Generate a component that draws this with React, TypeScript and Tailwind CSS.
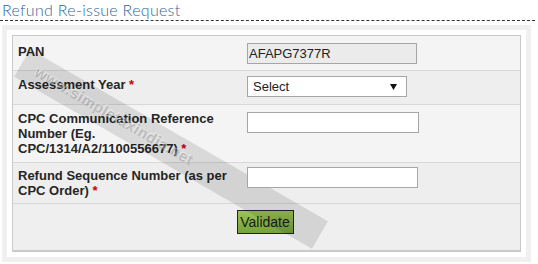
import React from "react";

const Star = () => <span className="text-[#cc0000]"> *</span>;

export default function App() {
  return (
    <div className="relative w-[538px] h-[264px] overflow-hidden bg-white font-['Liberation_Sans',Arial,sans-serif]">
      <div className="h-[21px] border-b border-dashed border-[#333] mr-[3px]">
        <div className="pl-[2px] text-[16px] leading-[19px] text-[#2f679b] font-['Lato',sans-serif] font-light tracking-[0.3px]">
          Refund Re-issue Request
        </div>
      </div>
      <div className="mt-[4px] ml-[2px] w-[529px] p-[5px] bg-[#f0f0f0]">
        <div className="bg-white p-[5px]">
          <div className="border border-b-2 border-[#c9c9c9] text-[13px] leading-[15px] text-[#262626]">
            {/* PAN */}
            <div className="flex h-[34px] bg-[#f4f4f4]">
              <div className="w-[228px] pl-[5px] pr-[5px] pt-[8px] font-bold">PAN</div>
              <div className="pl-[6px] pt-[7px]">
                <div className="relative z-10 w-[170px] h-[21px] border border-[#a6a6a6] bg-[#ebebeb] pl-[1px] leading-[19px] text-[#222]">
                  AFAPG7377R
                </div>
              </div>
            </div>
            {/* Assessment Year */}
            <div className="flex h-[34px] bg-[#eeeeee] border-t border-[#d8d8d8]">
              <div className="w-[228px] pl-[5px] pr-[5px] pt-[6px] font-bold">
                Assessment Year<Star />
              </div>
              <div className="pl-[6px] pt-[5px]">
                <div className="relative z-10 flex items-center justify-between w-[160px] h-[21px] border border-[#a6a6a6] bg-white pl-[5px] pr-[9px] leading-[19px] text-[#222]">
                  <span>Select</span>
                  <svg width="7" height="6" viewBox="0 0 7 6">
                    <polygon points="0,0 7,0 3.5,6" fill="#111" />
                  </svg>
                </div>
              </div>
            </div>
            {/* CPC */}
            <div className="flex h-[58px] bg-[#f4f4f4] border-t border-[#d8d8d8]">
              <div className="w-[228px] pl-[5px] pr-[5px] pt-[6px] font-bold">
                CPC Communication Reference Number (Eg. CPC/1314/A2/1100556677)<Star />
              </div>
              <div className="pl-[6px] pt-[7px]">
                <div className="relative z-10 w-[172px] h-[21px] border border-[#a6a6a6] bg-white" />
              </div>
            </div>
            {/* Refund Seq */}
            <div className="flex h-[41px] bg-[#eeeeee] border-t border-[#d8d8d8]">
              <div className="w-[228px] pl-[5px] pr-[5px] pt-[5px] font-bold">
                Refund Sequence Number (as per CPC Order)<Star />
              </div>
              <div className="pl-[6px] pt-[4px]">
                <div className="relative z-10 w-[171px] h-[21px] border border-[#a6a6a6] bg-white" />
              </div>
            </div>
            {/* Button */}
            <div className="flex justify-center h-[47px] bg-[#efefef] border-t border-[#d8d8d8] pt-[6px]">
              <div className="ml-[-3px] h-[24px] w-[57px] border border-[#222] bg-gradient-to-b from-[#9cc456] to-[#75a23a] flex items-center justify-center text-[14px] text-[#1a1a1a]">
                Validate
              </div>
            </div>
          </div>
        </div>
      </div>
      {/* watermark */}
      <div className="absolute left-[-1px] top-[133px] w-[344px] h-[32px] rotate-[30deg] bg-black/[0.11] flex items-center pl-[16px] pointer-events-none z-[5]">
        <span className="text-[15px] font-bold text-black/[0.18] tracking-[0.5px] [text-shadow:-1px_-1px_0_rgba(255,255,255,0.4)]">
          www.simpletaxindia.net
        </span>
      </div>
    </div>
  );
}
